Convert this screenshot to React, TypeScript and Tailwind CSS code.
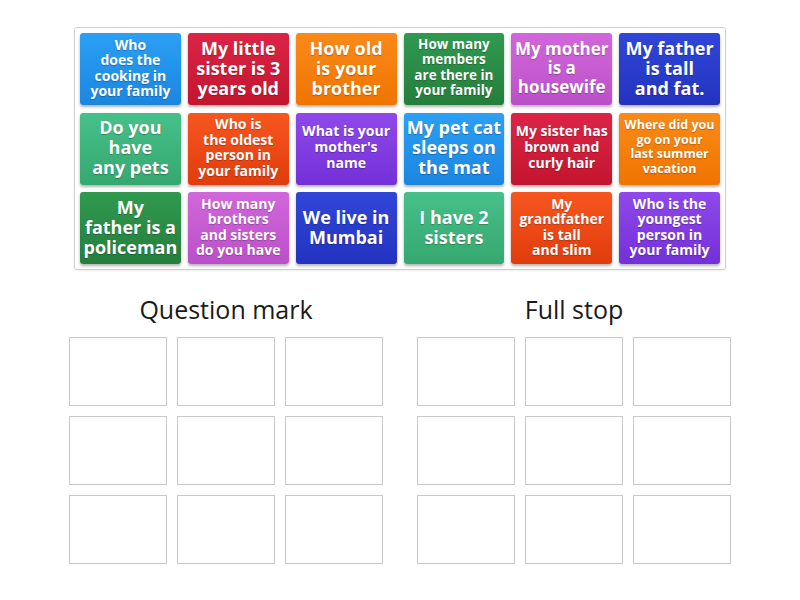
import React from 'react';

type Tile = { lines: string[]; size: string };

// colour cycle used by the tiles, lighter at the top edge
const palette = [
  'from-[#2ba0f5] to-[#1b86e0]',
  'from-[#dc2446] to-[#c3152f]',
  'from-[#fa8a17] to-[#f07400]',
  'from-[#2f9a4f] to-[#257e3c]',
  'from-[#d267dc] to-[#bb4fc9]',
  'from-[#3046d8] to-[#2333c0]',
  'from-[#46c08a] to-[#35a86f]',
  'from-[#f8561f] to-[#e03c0c]',
  'from-[#8f48ea] to-[#7430d8]',
];

const tiles: Tile[] = [
  { lines: ['Who', 'does the', 'cooking in', 'your family'], size: 'text-[14px] leading-[15.5px]' },
  { lines: ['My little', 'sister is 3', 'years old'], size: 'text-[18px] leading-[20px]' },
  { lines: ['How old', 'is your', 'brother'], size: 'text-[18px] leading-[20px]' },
  { lines: ['How many', 'members', 'are there in', 'your family'], size: 'text-[13.5px] leading-[15.5px]' },
  { lines: ['My mother', 'is a', 'housewife'], size: 'text-[17px] leading-[19px]' },
  { lines: ['My father', 'is tall', 'and fat.'], size: 'text-[18px] leading-[20px]' },
  { lines: ['Do you', 'have', 'any pets'], size: 'text-[18px] leading-[20px]' },
  { lines: ['Who is', 'the oldest', 'person in', 'your family'], size: 'text-[14px] leading-[15.5px]' },
  { lines: ["What is your", "mother's", 'name'], size: 'text-[14px] leading-[16px]' },
  { lines: ['My pet cat', 'sleeps on', 'the mat'], size: 'text-[18px] leading-[20px]' },
  { lines: ['My sister has', 'brown and', 'curly hair'], size: 'text-[14px] leading-[16px]' },
  { lines: ['Where did you', 'go on your', 'last summer', 'vacation'], size: 'text-[12.5px] leading-[14.5px]' },
  { lines: ['My', 'father is a', 'policeman'], size: 'text-[18px] leading-[20px]' },
  { lines: ['How many', 'brothers', 'and sisters', 'do you have'], size: 'text-[14px] leading-[15.5px]' },
  { lines: ['We live in', 'Mumbai'], size: 'text-[18px] leading-[20px]' },
  { lines: ['I have 2', 'sisters'], size: 'text-[18px] leading-[20px]' },
  { lines: ['My', 'grandfather', 'is tall', 'and slim'], size: 'text-[14px] leading-[15.5px]' },
  { lines: ['Who is the', 'youngest', 'person in', 'your family'], size: 'text-[14px] leading-[15.5px]' },
];

const DropZone: React.FC<{ title: string }> = ({ title }) => (
  <div className="w-[314px] flex flex-col items-center">
    <h2 className="text-[25px] leading-[30px] text-[#1a1a1a] mb-[13px]">{title}</h2>
    <div className="grid grid-cols-3 gap-x-[10px] gap-y-[10px] w-full">
      {Array.from({ length: 9 }).map((_, i) => (
        <div key={i} className="h-[69px] border border-[#c9c9c9] bg-white" />
      ))}
    </div>
  </div>
);

export default function App() {
  return (
    <div className="w-[800px] h-[600px] bg-white font-['Open_Sans',sans-serif] pt-[27px]">
      {/* Tiles waiting to be sorted */}
      <div className="mx-auto w-[652px] border border-[#cfcfcf] rounded-[3px] p-[5px] shadow-[0_1px_2px_rgba(0,0,0,0.08)]">
        <div className="grid grid-cols-6 gap-x-[7px] gap-y-[7.5px]">
          {tiles.map((t, i) => (
            <div
              key={i}
              className={`h-[72px] pb-[3px] rounded-[3px] bg-linear-to-b ${palette[i % 9]} shadow-[0_2px_3px_rgba(0,0,0,0.3)] flex items-center justify-center`}
            >
              <p className={`text-center text-white font-bold whitespace-nowrap [text-shadow:0_1px_1px_rgba(0,0,0,0.25)] ${t.size}`}>
                {t.lines.map((l, j) => (
                  <React.Fragment key={j}>
                    {j > 0 && <br />}
                    {l}
                  </React.Fragment>
                ))}
              </p>
            </div>
          ))}
        </div>
      </div>

      {/* Sorting groups */}
      <div className="flex justify-center gap-[34px] mt-[24px]">
        <DropZone title="Question mark" />
        <DropZone title="Full stop" />
      </div>
    </div>
  );
}
